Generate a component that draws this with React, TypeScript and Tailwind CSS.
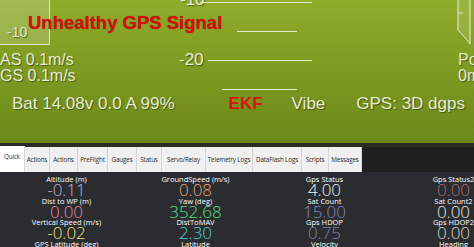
const hudText =
  "whitespace-nowrap leading-none text-[#e6ebd4] [text-shadow:1px_1px_1px_rgba(40,50,0,0.6)]"

const tabs = [
  { name: 'Quick', w: 'w-[25px]' },
  { name: 'Actions', w: 'w-[25px]' },
  { name: 'Actions', w: 'w-[28px]' },
  { name: 'PreFlight', w: 'w-[30px]' },
  { name: 'Gauges', w: 'w-[29px]' },
  { name: 'Status', w: 'w-[25px]' },
  { name: 'Servo/Relay', w: 'w-[44px]' },
  { name: 'Telemetry Logs', w: 'w-[47px]' },
  { name: 'DataFlash Logs', w: 'w-[49px]' },
  { name: 'Scripts', w: 'w-[27px]' },
  { name: 'Messages', w: 'w-[33px]' },
]

const cells = [
  { label: 'Altitude (m)', value: '-0.11', color: 'text-[#c9a8e6]' },
  { label: 'GroundSpeed (m/s)', value: '0.08', color: 'text-[#e6a77a]' },
  { label: 'Gps Status', value: '4.00', color: 'text-[#f2f2f2]' },
  { label: 'Gps Status2', value: '0.00', color: 'text-[#a86a7a]' },
  { label: 'Dist to WP (m)', value: '0.00', color: 'text-[#e88a98]' },
  { label: 'Yaw (deg)', value: '352.68', color: 'text-[#52e07e]' },
  { label: 'Sat Count', value: '15.00', color: 'text-[#8686c6]' },
  { label: 'Sat Count2', value: '0.00', color: 'text-[#e6e6e6]' },
  { label: 'Vertical Speed (m/s)', value: '-0.02', color: 'text-[#e8e67a]' },
  { label: 'DistToMAV', value: '2.30', color: 'text-[#4ad6ce]' },
  { label: 'Gps HDOP', value: '0.75', color: 'text-[#7a82a8]' },
  { label: 'Gps HDOP2', value: '0.00', color: 'text-[#d8d8c8]' },
  { label: 'GPS Latitude (deg)', value: '0.00', color: 'text-white' },
  { label: 'Latitude', value: '0.00', color: 'text-white' },
  { label: 'Velocity', value: '0.00', color: 'text-white' },
  { label: 'Heading', value: '0.00', color: 'text-white' },
]

function Hud() {
  return (
    <div className="relative h-[143px] overflow-hidden bg-gradient-to-b from-[#8fac2b] to-[#6c8819] font-['Liberation_Sans',Arial,sans-serif]">
      {/* top-left attitude box */}
      <div className="absolute left-0 top-0 h-[45px] w-[50px] border-b border-r border-[#dfe6bf] bg-[rgba(255,255,255,0.18)]" />
      <span className={`${hudText} absolute left-[7px] top-[25px] text-[14px]`}>-10</span>

      {/* pitch ladder */}
      <span className={`${hudText} absolute left-[180px] top-[-9px] text-[17px]`}>-10</span>
      <div className="absolute left-[200px] top-[2px] h-[1px] w-[112px] bg-[#e6ebcc]" />
      <div className="absolute left-[237px] top-[31px] h-[1px] w-[60px] bg-[#e6ebcc]" />
      <span className={`${hudText} absolute left-[179px] top-[51px] text-[17px]`}>-20</span>
      <div className="absolute left-[208px] top-[60px] h-[1px] w-[104px] bg-[#e6ebcc]" />
      <div className="absolute left-[222px] top-[89px] h-[1px] w-[75px] bg-[#e6ebcc]" />

      <span className="absolute left-[28px] top-[14px] whitespace-nowrap text-[18.5px] font-bold leading-none text-[#d40f0f] [text-shadow:0_0_1px_rgba(90,0,0,0.6)]">
        Unhealthy GPS Signal
      </span>

      <div className="absolute left-0 top-[52px] flex flex-col text-[16px]">
        <span className={`${hudText} leading-[15px]`}>AS 0.1m/s</span>
        <span className={`${hudText} leading-[15px]`}>GS 0.1m/s</span>
      </div>

      {/* heading box */}
      <svg className="absolute left-[450px] top-0" width="24" height="50" viewBox="0 0 24 50">
        <path d="M8 0 V30 L17 40 L20 44 V0 Z" fill="rgba(255,255,255,0.12)" />
        <path d="M8 0 V30 L17 40 L20 44 M20 0 V44 M8 13 H13" fill="none" stroke="#e6ebcc" strokeWidth="1" />
      </svg>
      <div className="absolute left-[458px] top-[52px] flex flex-col text-[16px]">
        <span className={`${hudText} leading-[15px]`}>Po</span>
        <span className={`${hudText} leading-[15px]`}>0m</span>
      </div>

      {/* status row */}
      <div className="absolute left-[12px] top-[95px] flex items-center text-[17px]">
        <span className={hudText}>Bat 14.08v 0.0 A 99%</span>
        <span className="ml-[54px] whitespace-nowrap font-bold leading-none text-[#d8140f]">EKF</span>
        <span className={`${hudText} ml-[29px]`}>Vibe</span>
        <span className={`${hudText} ml-[31px]`}>GPS: 3D dgps</span>
      </div>
    </div>
  )
}

export default function App() {
  return (
    <div className="h-[247px] w-[474px] overflow-hidden bg-[#2a2c2f]">
      <Hud />
      <div className="h-[4px] bg-[#2b2b27]" />

      {/* tab strip */}
      <div className="flex h-[25px] items-end bg-[#1f1f1f] font-['Open_Sans','Noto_Sans',sans-serif]">
        {tabs.map((t, i) => (
          <div
            key={i}
            className={`flex ${t.w} shrink-0 items-center justify-center overflow-hidden whitespace-nowrap border-r border-[#d6d6d6] text-[6.3px] tracking-[-0.15px] text-[#2a2a2a] ${
              i === 0 ? 'h-[26px] bg-white pb-[4px]' : 'h-[25px] bg-[#f0f0f0]'
            }`}
          >
            {t.name}
          </div>
        ))}
      </div>

      {/* quick view */}
      <div className="grid grid-cols-[129px_129px_129px_129px] pl-[2px] pt-[3px] font-['Open_Sans','Noto_Sans',sans-serif]">
        {cells.map((c) => (
          <div key={c.label} className="flex flex-col items-center">
            <span className="whitespace-nowrap text-[7.5px] leading-[8px] text-white">{c.label}</span>
            <span className={`whitespace-nowrap text-[17px] font-light leading-[13.5px] ${c.color}`}>{c.value}</span>
          </div>
        ))}
      </div>
    </div>
  )
}
